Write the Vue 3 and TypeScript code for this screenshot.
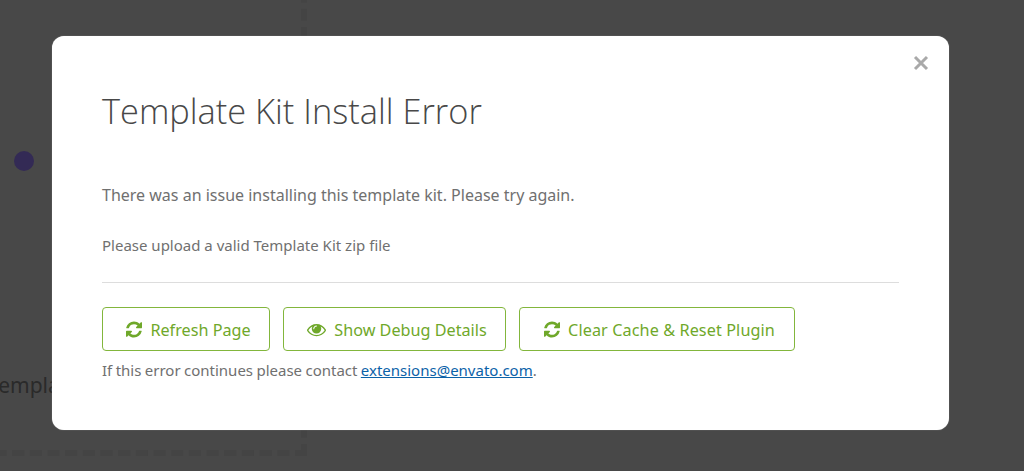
<template>
  <div class="page">
    <div class="backdrop">
      <div class="dropzone"></div>
      <span class="step-dot"></span>
      <span class="behind-text">Template Kit</span>
    </div>

    <section class="modal">
      <button class="close" aria-label="Close">
        <svg viewBox="0 0 16 16" width="16" height="16">
          <path d="M2 2l12 12M14 2L2 14" />
        </svg>
      </button>

      <h1>Template Kit Install Error</h1>
      <p class="lead">There was an issue installing this template kit. Please try again.</p>
      <p class="detail">Please upload a valid Template Kit zip file</p>
      <hr />

      <div class="actions">
        <button
          v-for="action in actions"
          :key="action.label"
          class="action"
          :style="{ width: action.width + 'px' }"
        >
          <svg :viewBox="icons[action.icon].box" :width="icons[action.icon].width" height="17">
            <path :d="icons[action.icon].d" />
          </svg>
          {{ action.label }}
        </button>
      </div>

      <p class="contact">
        If this error continues please contact
        <a href="#">extensions@envato.com</a>.
      </p>
    </section>
  </div>
</template>

<script setup lang="ts">
const icons = {
  refresh: {
    box: '128 128 1536 1536',
    width: 16,
    d: 'M1639 1056q0 5-1 7-64 268-268 434.5t-478 166.5q-146 0-282.5-55t-243.5-157l-129 129q-19 19-45 19t-45-19-19-45v-448q0-26 19-45t45-19h448q26 0 45 19t19 45-19 45l-137 137q71 66 161 102t187 36q134 0 250-65t186-179q11-17 53-117 8-23 30-23h192q13 0 22.5 9.5t9.5 22.5zm25-800v448q0 26-19 45t-45 19h-448q-26 0-45-19t-19-45 19-45l138-138q-148-137-349-137-134 0-250 65t-186 179q-11 17-53 117-8 23-30 23h-199q-13 0-22.5-9.5t-9.5-22.5v-7q65-268 270-434.5t480-166.5q146 0 284 55.5t245 156.5l130-129q19-19 45-19t45 19 19 45z',
  },
  eye: {
    box: '0 224 1792 1344',
    width: 19,
    d: 'M1664 960q-152-236-381-353 61 104 61 225 0 185-131.5 316.5t-316.5 131.5-316.5-131.5-131.5-316.5q0-121 61-225-229 117-381 353 133 205 333.5 326.5t434.5 121.5 434.5-121.5 333.5-326.5zm-720-384q0-20-14-34t-34-14q-125 0-214.5 89.5t-89.5 214.5q0 20 14 34t34 14 34-14 14-34q0-86 61-147t147-61q20 0 34-14t14-34zm848 384q0 34-20 69-140 230-376.5 368.5t-499.5 138.5-499.5-139-376.5-368q-20-35-20-69t20-69q140-229 376.5-368t499.5-139 499.5 139 376.5 368q20 35 20 69z',
  },
};

const actions: { label: string; icon: keyof typeof icons; width: number }[] = [
  { label: 'Refresh Page', icon: 'refresh', width: 168 },
  { label: 'Show Debug Details', icon: 'eye', width: 223 },
  { label: 'Clear Cache & Reset Plugin', icon: 'refresh', width: 276 },
];
</script>

<style>
html,
body {
  margin: 0;
  background: #484848;
  overflow: hidden;
}
</style>

<style scoped>
.page {
  position: relative;
  height: 471px;
  padding: 36px 0 0 52px;
  box-sizing: border-box;
  overflow: hidden;
  background: #484848;
  font-family: 'Noto Sans', 'Open Sans', sans-serif;
}

.backdrop {
  position: absolute;
  inset: 0;
}

.dropzone {
  position: absolute;
  left: -200px;
  top: -100px;
  width: 495px;
  height: 544px;
  border: 6px dashed #444;
}

.step-dot {
  position: absolute;
  left: 14px;
  top: 151px;
  width: 20px;
  height: 20px;
  border-radius: 50%;
  background: #332a55;
}

.behind-text {
  position: absolute;
  left: -12px;
  top: 371px;
  font-size: 21px;
  color: #2a2a2a;
  white-space: nowrap;
}

.modal {
  position: relative;
  width: 897px;
  height: 394px;
  box-sizing: border-box;
  padding: 50px 50px 0;
  background: #fff;
  border-radius: 12px;
  box-shadow: 0 0 1px 0 #aaa;
}

.close {
  position: absolute;
  top: 19px;
  right: 20px;
  padding: 0;
  border: none;
  background: none;
  display: flex;
}

.close path {
  fill: none;
  stroke: #a9a9a9;
  stroke-width: 3;
}

h1 {
  margin: 0;
  font-size: 34.4px;
  font-weight: 300;
  line-height: 50px;
  color: #484848;
  font-family: 'Open Sans', sans-serif;
}

.lead {
  margin: 48px 0 0;
  font-size: 16px;
  line-height: 22px;
  color: #707070;
}

.detail {
  margin: 28px 0 0;
  font-size: 15px;
  line-height: 22px;
  color: #707070;
}

hr {
  margin: 26px 0 24px;
  border: none;
  border-top: 1px solid #ddd;
}

.actions {
  display: flex;
  gap: 13px;
}

.action {
  height: 44px;
  padding: 1px 0 0 5px;
  display: flex;
  align-items: center;
  justify-content: center;
  gap: 8px;
  background: #fff;
  border: 1px solid #82b63c;
  border-radius: 4px;
  color: #6fa82a;
  font: inherit;
  font-size: 16.2px;
}

.action:last-child {
  letter-spacing: 0.1px;
}

.action svg {
  fill: #6fa82a;
}

.contact {
  margin: 9px 0 0;
  font-size: 15px;
  line-height: 20px;
  color: #707070;
  word-spacing: -0.5px;
}

.contact a {
  color: #0b62a8;
  word-spacing: 0;
}
</style>
